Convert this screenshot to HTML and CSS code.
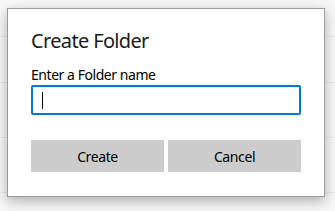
FILE: index.html
```html
<!DOCTYPE html>
<html lang="en">
  <head>
    <meta charset="UTF-8" />
    <title>Create Folder</title>
    <link rel="stylesheet" href="styles.css">
  </head>
  <body>
    <section class="dialog">
      <h2 class="title">Create Folder</h2>
      <p class="label">Enter a Folder name</p>
      <div class="field"><span class="caret"></span></div>
      <div class="buttons">
        <button class="btn">Create</button>
        <button class="btn">Cancel</button>
      </div>
    </section>
  </body>
</html>
```

FILE: styles.css
```css
* {
  margin: 0px;
  padding: 0px;
  box-sizing: border-box;
}
body {
  height: 211px;
  overflow: hidden;
  font-family: "Noto Sans", "Open Sans", sans-serif;
  color: #000;
  background-color: #f7f7f7;
  background-image: repeating-linear-gradient(
    to bottom,
    transparent 0px,
    transparent 26px,
    #e9e9e9 26px,
    #e9e9e9 27px,
    transparent 27px,
    transparent 55px
  );
  background-position: 0 56px;
  padding-top: 8px;
  padding-left: 7px;
}
.dialog {
  width: 318px;
  height: 189px;
  background-color: white;
  border: 1px solid #9c9c9c;
  box-shadow: 0 4px 12px rgba(0, 0, 0, 0.3);
  padding: 18px 23px 0 23px;
}
.title {
  font-size: 20px;
  font-weight: normal;
  line-height: 28px;
  letter-spacing: -0.65px;
  color: #1a1a1a;
}
.label {
  font-size: 14px;
  line-height: 20px;
  letter-spacing: -0.45px;
  margin-top: 10px;
}
.field {
  height: 30px;
  border: 2px solid #0078d7;
  border-radius: 2px;
  padding: 5px 0 0 9px;
}
.caret {
  display: block;
  width: 1px;
  height: 17px;
  background-color: black;
}
.buttons {
  display: flex;
  gap: 4px;
  margin-top: 25px;
}
.btn {
  flex: 1;
  height: 32px;
  border: none;
  background-color: #cccccc;
  font-family: inherit;
  font-size: 14px;
  letter-spacing: -0.4px;
  color: #000;
}
```
